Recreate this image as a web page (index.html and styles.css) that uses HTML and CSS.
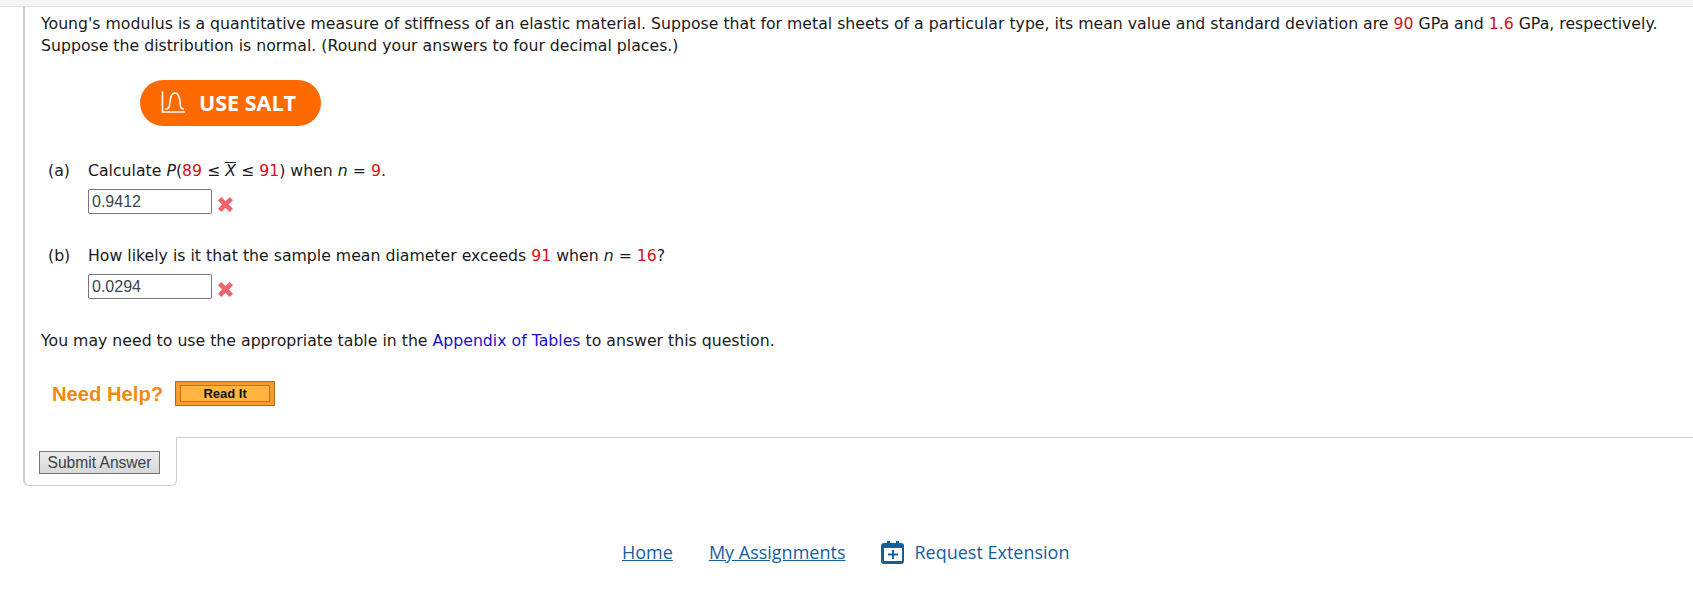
FILE: index.html
```html
<!DOCTYPE html>
<html lang="en">
<head>
<meta charset="utf-8">
<title>Question</title>
<link rel="stylesheet" href="styles.css">
</head>
<body>
<div class="topbar"></div>
<main class="sheet">
  <section class="question">
    <p class="intro">Young's modulus is a quantitative measure of stiffness of an elastic material. Suppose that for metal sheets of a particular type, its mean value and standard deviation are <span class="red">90</span> GPa and <span class="red">1.6</span> GPa, respectively.<br>Suppose the distribution is normal. (Round your answers to four decimal places.)</p>
    <a class="salt" href="#">
      <svg class="salt-icon" viewBox="0 0 24 24" width="24" height="24" fill="none" stroke="#fff" stroke-width="1.6"><path d="M1.500 1.500V22H24"/><path d="M4 19c4 0 4.500-1 5-7 .5-6 1.500-9 5-9s4.500 3 5 9c.5 6 1 7 4 7"/></svg>
      <span>USE SALT</span>
    </a>
    <div class="part part-a">
      <p class="part-line"><span class="part-label">(a)</span>Calculate <i>P</i>(<span class="red">89</span> ≤ <span class="xbar"><i>X</i></span> ≤ <span class="red">91</span>) when <i>n</i> = <span class="red">9</span>.</p>
      <div class="answer"><input class="answer-input" type="text" value="0.9412" readonly><svg class="wrong" viewBox="0 0 16 16" width="17" height="17"><path d="M2.500 2.500 13.500 13.500M13.500 2.500 2.500 13.500" stroke="#f4626a" stroke-width="4.400"/></svg></div>
    </div>
    <div class="part part-b">
      <p class="part-line"><span class="part-label">(b)</span>How likely is it that the sample mean diameter exceeds <span class="red">91</span> when <i>n</i> = <span class="red">16</span>?</p>
      <div class="answer"><input class="answer-input" type="text" value="0.0294" readonly><svg class="wrong" viewBox="0 0 16 16" width="17" height="17"><path d="M2.500 2.500 13.500 13.500M13.500 2.500 2.500 13.500" stroke="#f4626a" stroke-width="4.400"/></svg></div>
    </div>
    <p class="note">You may need to use the appropriate table in the <a class="blue" href="#">Appendix of Tables</a> to answer this question.</p>
    <div class="help">
      <span class="help-label">Need Help?</span>
      <a class="readit" href="#"><span class="readit-inner">Read It</span></a>
    </div>
  </section>
  <div class="actions">
    <div class="submit-cell"><button class="submit" type="button">Submit Answer</button></div>
    <div class="actions-rest"></div>
  </div>
</main>
<nav class="footer">
  <a class="foot-link" href="#">Home</a>
  <a class="foot-link" href="#">My Assignments</a>
  <span class="extension">
    <svg viewBox="0 0 24 24" width="24" height="24"><path fill="#12609b" d="M4 3h2V1h3v2h6V1h3v2h2a3 3 0 0 1 3 3v15a3 3 0 0 1-3 3H3a3 3 0 0 1-3-3V6a3 3 0 0 1 3-3zM3 8v12.500a.5.5 0 0 0 .5.5h17a.5.5 0 0 0 .5-.5V8z"/><path fill="#12609b" d="M11 10h2v3.500h4v2h-4V19h-2v-3.500H7v-2h4z"/></svg>
    <span>Request Extension</span>
  </span>
</nav>
</body>
</html>
```
FILE: styles.css
```css
* { box-sizing: border-box; }
html, body { margin: 0; padding: 0; }
body {
  background: #fff;
  color: #1a1a1a;
  font-family: "DejaVu Sans", Verdana, sans-serif;
  font-size: 15.72px;
  line-height: 22px;
  overflow: hidden;
}
p { margin: 0; }
.red { color: #d3121a; }
.blue { color: #1a10c8; text-decoration: none; }

.topbar {
  height: 7px;
  background: #f6f6f6;
  border-bottom: 1px solid #dcdcdc;
}
.sheet { margin-left: 23px; }
.question {
  border-left: 2px solid #cfcfcf;
  padding: 6px 0 0 16px;
  height: 430px;
}
.salt {
  display: flex;
  align-items: center;
  gap: 14px;
  width: 181px;
  height: 46px;
  margin: 23px 0 0 99px;
  padding-left: 21px;
  border-radius: 23px;
  background: #ff6a00;
  color: #fff;
  font-family: "Open Sans", sans-serif;
  font-size: 21.500px;
  font-weight: 700;
  text-decoration: none;
}
.salt-icon { flex: none; margin-top: -2px; }
.part { margin-left: 7px; }
.part-a { margin-top: 34px; }
.part-b { margin-top: 31px; }
.part-label { display: inline-block; width: 40px; }
.xbar { position: relative; display: inline-block; border-top: 1px solid #1a1a1a; line-height: 15px; }
.answer {
  display: flex;
  align-items: center;
  gap: 5px;
  margin: 7px 0 0 40px;
}
.answer-input {
  width: 124px;
  height: 25px;
  padding: 0 3px;
  border: 1px solid #767676;
  border-radius: 2px;
  background: #fff;
  color: #3a4650;
  font-family: "Liberation Sans", Arial, sans-serif;
  font-size: 16px;
}
.wrong { flex: none; margin-top: 5px; }
.note { margin-top: 31px; }
.help {
  display: flex;
  align-items: center;
  gap: 12px;
  margin: 29px 0 0 11px;
}
.help-label {
  color: #f08a10;
  font-family: "Liberation Sans", Arial, sans-serif;
  font-size: 20.200px;
  font-weight: 700;
}
.readit {
  display: block;
  width: 100px;
  height: 25px;
  padding: 3px 4px;
  border: 1px solid #b06a1c;
  background: #f9992f;
  text-decoration: none;
}
.readit-inner {
  display: block;
  height: 17px;
  border: 1px solid #b8751a;
  background: #ffb53f;
  color: #111;
  font-family: "Liberation Sans", Arial, sans-serif;
  font-size: 13px;
  font-weight: 700;
  line-height: 15px;
  text-align: center;
}
.actions { display: flex; }
.submit-cell {
  width: 154px;
  height: 49px;
  padding: 14px 0 0 14px;
  border: 1px solid #cfcfcf;
  border-width: 0 1px 1px 2px;
  border-radius: 0 0 6px 6px;
}
.submit {
  display: block;
  width: 121px;
  height: 23px;
  padding: 0;
  border: 1px solid #767676;
  background: linear-gradient(#ececec, #d8d8d8);
  color: #3c4248;
  font-family: "Liberation Sans", Arial, sans-serif;
  font-size: 15.600px;
  line-height: 21px;
}
.actions-rest { flex: 1; border-top: 1px solid #cfcfcf; }

.footer {
  display: flex;
  align-items: center;
  gap: 36px;
  margin: 49px 0 0 622px;
  font-family: "Open Sans", sans-serif;
  font-size: 18px;
  line-height: 34px;
}
.foot-link { color: #17609e; text-decoration: underline; }
.extension { display: flex; align-items: center; gap: 9px; color: #17609e; }
```
